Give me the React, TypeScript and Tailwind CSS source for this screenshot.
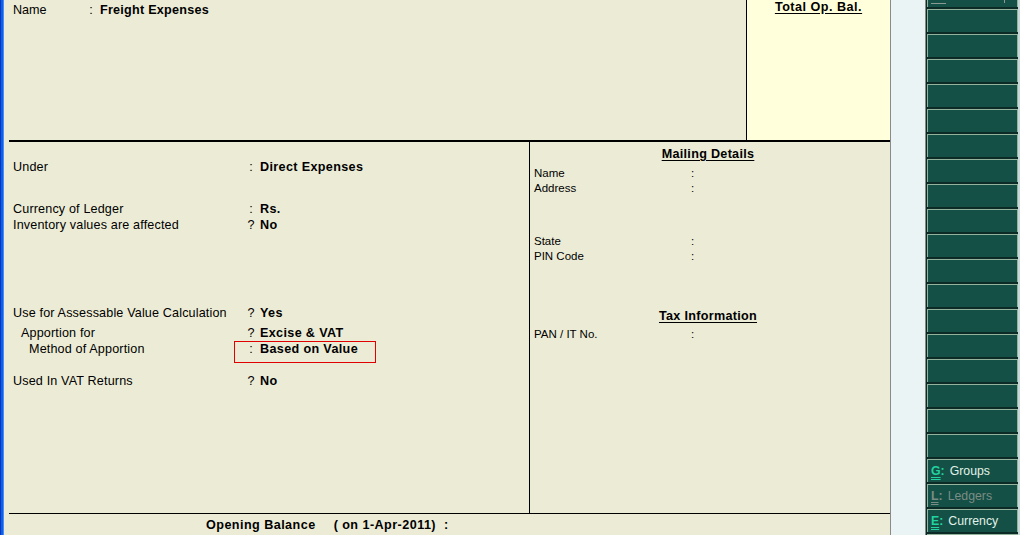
import React from "react";

const font = "font-['Liberation_Sans',Arial,sans-serif]";

function Field({
  label,
  sep,
  value,
  indent = 0,
  mt = 0,
  boxed = false,
}: {
  label: string;
  sep: string;
  value: string;
  indent?: number;
  mt?: number;
  boxed?: boolean;
}) {
  return (
    <div className="relative flex h-[16px] items-center text-[12.6px] leading-none text-black" style={{ marginTop: mt }}>
      <div className="w-[235px] shrink-0 pl-[4px] tracking-[0.15px]">
        <span style={{ paddingLeft: indent }}>{label}</span>
      </div>
      <div className="w-[14px] shrink-0 text-center">{sep}</div>
      <div className="pl-[2px] font-bold tracking-[0.35px]">{value}</div>
      {boxed && (
        <div className="absolute left-[225px] top-0 h-[22px] w-[142px] border border-[#e00000]" />
      )}
    </div>
  );
}

function SmallField({ label, mt = 0 }: { label: string; mt?: number }) {
  return (
    <div className="flex h-[15px] items-center text-[11.5px] leading-none text-black" style={{ marginTop: mt }}>
      <div className="w-[157px] shrink-0">{label}</div>
      <div>:</div>
    </div>
  );
}

function Btn({ k, label, disabled = false }: { k?: string; label?: string; disabled?: boolean }) {
  return (
    <div className="flex h-[25px] shrink-0 flex-col">
      <div className="flex h-[23px] items-center border-l border-r border-t border-[#93b39c] bg-[#145046] pl-[3px] text-[12.3px] leading-none">
        {k && (
          <span className={disabled ? "text-[#7b8c84]" : ""}>
            <span
              className={
                "font-bold underline decoration-double underline-offset-[2px] " +
                (disabled ? "text-[#7b8c84]" : "text-[#22d3a0]")
              }
            >
              {k}
            </span>
            <span className={"font-bold " + (disabled ? "text-[#7b8c84]" : "text-[#22d3a0]")}>:</span>
            <span className={"ml-[5px] " + (disabled ? "text-[#7b8c84]" : "text-[#e2f2e8]")}>{label}</span>
          </span>
        )}
      </div>
      <div className="h-[2px] bg-[#0c2b26]" />
    </div>
  );
}

export default function App() {
  const empties = Array.from({ length: 18 });
  return (
    <div className={"flex h-[535px] w-[1020px] overflow-hidden " + font}>
      {/* left window edge */}
      <div className="flex w-[4px] shrink-0">
        <div className="w-px bg-[#0036b4]" />
        <div className="w-[2px] bg-[#0a5ef0]" />
        <div className="w-px bg-[#4a8cf0]" />
      </div>

      {/* main form */}
      <div className="flex w-[887px] shrink-0 flex-col border-r border-[#8a8a8a] bg-[#ECECD6]">
        {/* top section */}
        <div className="ml-[5px] flex h-[142px] shrink-0 border-b-2 border-black">
          <div className="flex-1">
            <div className="mt-[2px] flex h-[16px] items-center text-[12.6px] leading-none text-black">
              <div className="w-[78px] shrink-0 pl-[4px]">Name</div>
              <div className="w-[8px] text-center">:</div>
              <div className="pl-[5px] font-bold tracking-[0.25px]">Freight Expenses</div>
            </div>
          </div>
          <div className="w-[144px] shrink-0 border-l border-black bg-[#FFFFDB]">
            <div className="mt-0 text-center text-[12.6px] font-bold leading-[14px] tracking-[0.5px] text-black underline underline-offset-[2px]">
              Total Op. Bal.
            </div>
          </div>
        </div>

        {/* middle section */}
        <div className="ml-[5px] flex h-[372px] shrink-0 border-b border-black">
          <div className="w-[521px] shrink-0 border-r border-black">
            <Field label="Under" sep=":" value="Direct Expenses" mt={17} />
            <Field label="Currency of Ledger" sep=":" value="Rs." mt={26} />
            <Field label="Inventory values are affected" sep="?" value="No" />
            <Field label="Use for Assessable Value Calculation" sep="?" value="Yes" mt={72} />
            <Field label="Apportion for" sep="?" value="Excise & VAT" indent={8} mt={4} />
            <Field label="Method of Apportion" sep=":" value="Based on Value" indent={16} boxed />
            <Field label="Used In VAT Returns" sep="?" value="No" mt={16} />
          </div>
          <div className="flex-1 pl-[4px]">
            <div className="mt-[4px] flex h-[16px] items-center justify-center pr-[8px] text-[12.6px] font-bold leading-none tracking-[0.3px] text-black">
              <span className="underline underline-offset-[2px]">Mailing Details</span>
            </div>
            <SmallField label="Name" mt={4} />
            <SmallField label="Address" />
            <SmallField label="State" mt={38} />
            <SmallField label="PIN Code" />
            <div className="mt-[44px] flex h-[16px] items-center justify-center pr-[8px] text-[12.6px] font-bold leading-none tracking-[0.3px] text-black">
              <span className="underline underline-offset-[2px]">Tax Information</span>
            </div>
            <SmallField label="PAN / IT No." mt={3} />
          </div>
        </div>

        {/* bottom row */}
        <div className="ml-[5px] flex h-[21px] items-center pl-[197px] pt-[2px] text-[12.6px] font-bold leading-none tracking-[0.45px] text-black">
          <span>Opening Balance</span>
          <span className="ml-[18px]">( on 1-Apr-2011) &nbsp;:</span>
        </div>
      </div>

      {/* light strip */}
      <div className="w-[34px] shrink-0 bg-[#EAF4F4]" />
      <div className="w-px shrink-0 bg-[#7f8a8a]" />
      <div className="w-px shrink-0 bg-[#0c2b26]" />

      {/* button bar */}
      <div className="flex w-[91px] shrink-0 flex-col">
        <div className="flex h-[9px] shrink-0 flex-col">
          <div className="relative h-[7px] border-l border-r border-[#93b39c] bg-[#145046]">
            <div className="absolute left-[3px] top-[3px] h-px w-[15px] bg-[#8a9a92]" />
            <div className="absolute left-[76px] top-0 h-[3px] w-px bg-[#8a9a92]" />
          </div>
          <div className="h-[2px] bg-[#0c2b26]" />
        </div>
        {empties.map((_, i) => (
          <Btn key={i} />
        ))}
        <Btn k="G" label="Groups" />
        <Btn k="L" label="Ledgers" disabled />
        <Btn k="E" label="Currency" />
        <Btn />
      </div>
      <div className="w-[2px] shrink-0 bg-[#c8d8d8]" />
    </div>
  );
}
